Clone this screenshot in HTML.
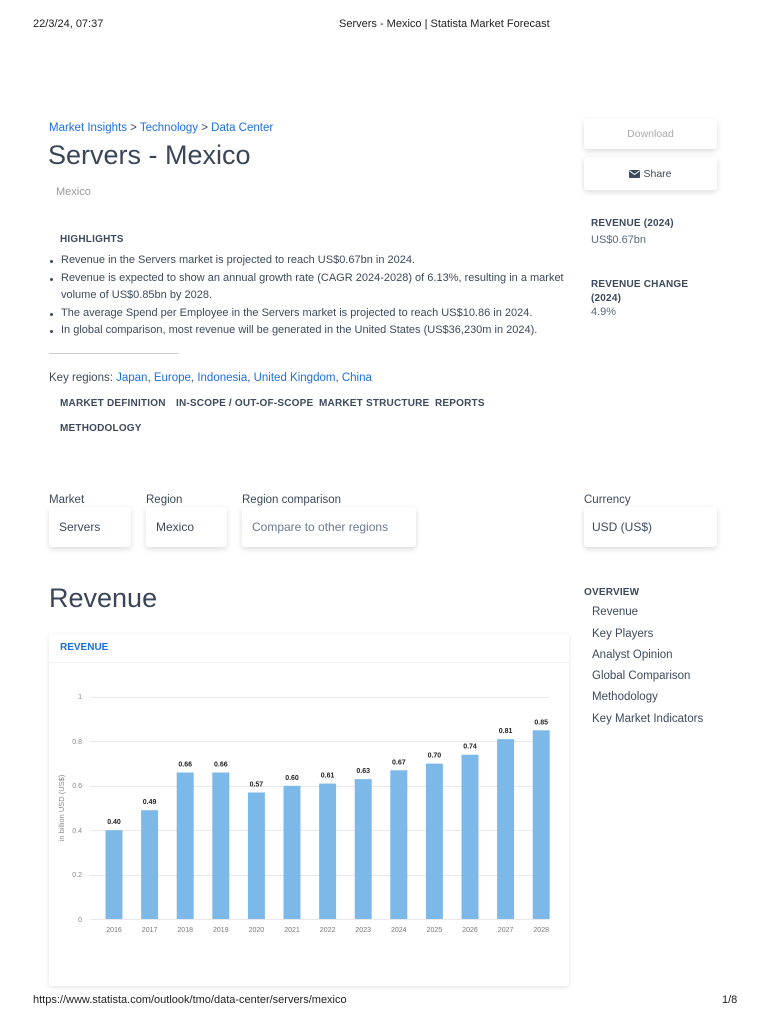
<!DOCTYPE html><html><head><meta charset="utf-8"><style>
*{margin:0;padding:0;box-sizing:border-box}
body{width:768px;height:1024px;background:#fff;font-family:"Liberation Sans",sans-serif;color:#3d4a5c;position:relative;overflow:hidden}
.a{position:absolute;white-space:nowrap}
.hd{font-size:11px;color:#222}
.blue{color:#1c6fe0}
.t11{font-size:11px}
.cap{font-size:10px;font-weight:bold;color:#3d4a5c;letter-spacing:.2px}
.box{position:absolute;background:#fff;box-shadow:0 2px 6px rgba(0,0,0,.15);border-radius:3px;font-size:12px;color:#3d4a5c;padding-left:10px;line-height:40px;height:40px}
ul{list-style:none}
li{position:relative;padding-left:12px;font-size:11px;line-height:17.5px}
li:before{content:"";position:absolute;left:1px;top:8px;width:3px;height:3px;border-radius:50%;background:#3d4a5c}
.nav{font-size:11.5px;color:#3d4a5c}
</style></head><body>
<div class="a hd" style="left:33px;top:18px">22/3/24, 07:37</div>
<div class="a hd" style="left:339px;top:18px">Servers - Mexico | Statista Market Forecast</div>
<div class="a hd" style="left:33px;top:994px">https://www.statista.com/outlook/tmo/data-center/servers/mexico</div>
<div class="a hd" style="left:722px;top:994px">1/8</div>

<div class="a blue" style="left:49px;top:122px;font-size:11.5px">Market Insights <span style="color:#3d4a5c">&gt;</span> Technology <span style="color:#3d4a5c">&gt;</span> Data Center</div>
<div class="a" style="left:48px;top:140px;font-size:27px;color:#3a4658">Servers - Mexico</div>
<div class="a" style="left:56px;top:186px;font-size:11px;color:#999">Mexico</div>
<div class="a cap" style="left:60px;top:234px">HIGHLIGHTS</div>
<ul class="a" style="left:49px;top:252px">
<li>Revenue in the Servers market is projected to reach US$0.67bn in 2024.</li>
<li>Revenue is expected to show an annual growth rate (CAGR 2024-2028) of 6.13%, resulting in a market<br>volume of US$0.85bn by 2028.</li>
<li>The average Spend per Employee in the Servers market is projected to reach US$10.86 in 2024.</li>
<li>In global comparison, most revenue will be generated in the United States (US$36,230m in 2024).</li>
</ul>
<div class="a" style="left:49px;top:353px;width:130px;height:1px;background:#ccc"></div>
<div class="a t11" style="left:49px;top:372px;font-size:11.5px">Key regions: <span class="blue">Japan</span>, <span class="blue">Europe</span>, <span class="blue">Indonesia</span>, <span class="blue">United Kingdom</span>, <span class="blue">China</span></div>
<div class="a cap" style="left:60px;top:398px">MARKET DEFINITION</div>
<div class="a cap" style="left:176px;top:398px">IN-SCOPE / OUT-OF-SCOPE</div>
<div class="a cap" style="left:319px;top:398px">MARKET STRUCTURE</div>
<div class="a cap" style="left:435px;top:398px">REPORTS</div>
<div class="a cap" style="left:60px;top:423px">METHODOLOGY</div>

<div class="box" style="left:584px;top:119px;width:133px;height:30px;line-height:30px;padding:0;text-align:center;color:#aaa;font-size:10.5px">Download</div>
<div class="box" style="left:584px;top:157px;width:133px;height:33px;line-height:35px;padding:0;text-align:center;font-size:10.5px;color:#3d4a5c"><svg width="11" height="8" viewBox="0 0 11 8" style="vertical-align:-1px;margin-right:3px"><rect width="11" height="8" rx="1" fill="#3d4a5c"/><path d="M0.5 0.8L5.5 4.5L10.5 0.8" stroke="#fff" stroke-width="1" fill="none"/></svg>Share</div>
<div class="a cap" style="left:591px;top:218px">REVENUE (2024)</div>
<div class="a t11" style="left:591px;top:234px;color:#5a6a80">US$0.67bn</div>
<div class="a cap" style="left:591px;top:278px;line-height:14px">REVENUE CHANGE<br>(2024)</div>
<div class="a t11" style="left:591px;top:306px;color:#5a6a80">4.9%</div>

<div class="a" style="left:49px;top:494px;font-size:11.5px">Market</div>
<div class="a" style="left:146px;top:494px;font-size:11.5px">Region</div>
<div class="a" style="left:242px;top:494px;font-size:11.5px">Region comparison</div>
<div class="a" style="left:584px;top:494px;font-size:11.5px">Currency</div>
<div class="box" style="left:49px;top:507px;width:82px">Servers</div>
<div class="box" style="left:146px;top:507px;width:81px">Mexico</div>
<div class="box" style="left:242px;top:507px;width:174px;color:#6a7a90">Compare to other regions</div>
<div class="box" style="left:584px;top:507px;width:133px;padding-left:8px">USD (US$)</div>

<div class="a" style="left:49px;top:583px;font-size:27px;color:#3a4658">Revenue</div>
<div class="a cap" style="left:584px;top:587px">OVERVIEW</div>
<div class="a nav" style="left:592px;top:606px">Revenue</div>
<div class="a nav" style="left:592px;top:628px">Key Players</div>
<div class="a nav" style="left:592px;top:649px">Analyst Opinion</div>
<div class="a nav" style="left:592px;top:670px">Global Comparison</div>
<div class="a nav" style="left:592px;top:691px">Methodology</div>
<div class="a nav" style="left:592px;top:713px">Key Market Indicators</div>

<div class="a" style="left:49px;top:634px;width:520px;height:352px;background:#fff;box-shadow:0 1px 5px rgba(0,0,0,.12);border-radius:3px"></div>
<div class="a" style="left:49px;top:662px;width:520px;height:1px;background:#eef0f3"></div>
<div class="a" style="left:60px;top:642px;font-size:10px;font-weight:bold;color:#1c6fe0">REVENUE</div>
<svg class="a" style="left:0;top:0" width="768" height="1024">
<g stroke="#e6e8ec" stroke-width="1">
<line x1="90" y1="697.5" x2="549" y2="697.5"/><line x1="90" y1="741.5" x2="549" y2="741.5"/><line x1="90" y1="786.5" x2="549" y2="786.5"/><line x1="90" y1="830.5" x2="549" y2="830.5"/><line x1="90" y1="875.5" x2="549" y2="875.5"/><line x1="90" y1="919.5" x2="549" y2="919.5"/>
</g>
<g font-family="Liberation Sans" font-size="7" fill="#888" text-anchor="end">
<text x="82" y="699">1</text><text x="82" y="744">0.8</text><text x="82" y="788">0.6</text><text x="82" y="833">0.4</text><text x="82" y="877">0.2</text><text x="82" y="922">0</text>
</g>
<text transform="translate(64,808) rotate(-90)" font-family="Liberation Sans" font-size="7.5" fill="#888" text-anchor="middle">in billion USD (US$)</text>
<g fill="#7db9e8" id="bars"></g>
<g id="lab" font-family="Liberation Sans" font-size="7" text-anchor="middle"></g>
</svg>
<script>
var v=[.40,.49,.66,.66,.57,.60,.61,.63,.67,.70,.74,.81,.85],s="",l="";
for(var i=0;i<13;i++){var cx=114+i*35.6,h=v[i]*222,y=919-h;
s+='<rect x="'+(cx-8.5)+'" y="'+y+'" width="17" height="'+h+'"/>';
l+='<text x="'+cx+'" y="'+(y-6)+'" font-weight="bold" fill="#222">'+v[i].toFixed(2)+'</text><text x="'+cx+'" y="932" fill="#777">'+(2016+i)+'</text>';}
document.getElementById('bars').innerHTML=s;document.getElementById('lab').innerHTML=l;
</script>
</body></html>
